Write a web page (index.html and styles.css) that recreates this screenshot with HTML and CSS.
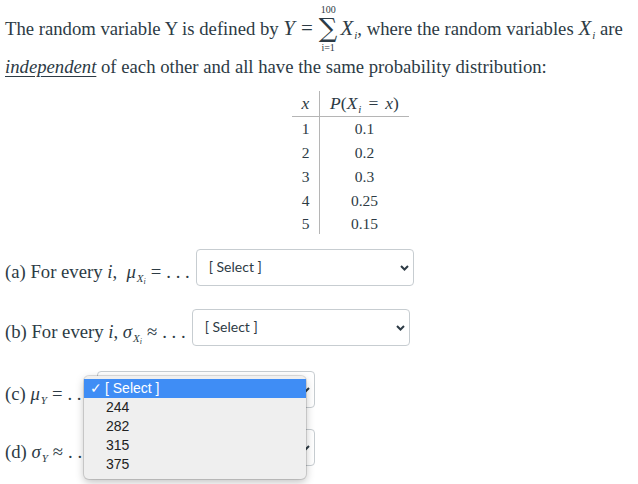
FILE: index.html
```html
<!DOCTYPE html>
<html>
<head>
<meta charset="utf-8">
<link rel="stylesheet" href="styles.css">
</head>
<body>
<div class="page">
  <p class="intro">The random variable Y is defined by <span class="m"><i>Y</i><span class="op">=</span><span class="sum"><span class="lim">100</span><span class="sig">∑</span><span class="lim lo">i=1</span></span><i>X</i><sub><i>i</i></sub></span>, where the random variables <span class="m"><i>X</i><sub><i>i</i></sub></span> are<br><u><i>independent</i></u> of each other and all have the same probability distribution:</p>

  <table class="dist">
    <tr class="head"><th class="cx"><i>x</i></th><th class="cp"><i>P</i>(<i>X</i><sub><i>i</i></sub><span class="op">=</span><i>x</i>)</th></tr>
    <tr><td class="cx">1</td><td class="cp">0.1</td></tr>
    <tr><td class="cx">2</td><td class="cp">0.2</td></tr>
    <tr><td class="cx">3</td><td class="cp">0.3</td></tr>
    <tr><td class="cx">4</td><td class="cp">0.25</td></tr>
    <tr><td class="cx">5</td><td class="cp">0.15</td></tr>
  </table>

  <div class="q qa">
    <span class="label">(a) For every <i>i</i>,&nbsp; <span class="m"><i>μ</i><sub><i>X</i><sub><i>i</i></sub></sub><span class="op">=</span>. . .</span></span>
    <div class="select"><span>[ Select ]</span><svg class="chev" width="9" height="6" viewBox="0 0 9 6"><path d="M1 1 L4.5 4.5 L8 1" fill="none" stroke="#2d3b45" stroke-width="2"/></svg></div>
  </div>
  <div class="q qb">
    <span class="label">(b) For every <i>i</i>, <span class="m"><i>σ</i><sub><i>X</i><sub><i>i</i></sub></sub><span class="op">≈</span>. . .</span></span>
    <div class="select"><span>[ Select ]</span><svg class="chev" width="9" height="6" viewBox="0 0 9 6"><path d="M1 1 L4.5 4.5 L8 1" fill="none" stroke="#2d3b45" stroke-width="2"/></svg></div>
  </div>
  <div class="q qc">
    <span class="label">(c) <span class="m"><i>μ</i><sub><i>Y</i></sub><span class="op">=</span>. . .</span></span>
    <div class="select"><span>[ Select ]</span><svg class="chev" width="9" height="6" viewBox="0 0 9 6"><path d="M1 1 L4.5 4.5 L8 1" fill="none" stroke="#2d3b45" stroke-width="2"/></svg></div>
  </div>
  <div class="q qd">
    <span class="label">(d) <span class="m"><i>σ</i><sub><i>Y</i></sub><span class="op">≈</span>. . .</span></span>
    <div class="select"><span>[ Select ]</span><svg class="chev" width="9" height="6" viewBox="0 0 9 6"><path d="M1 1 L4.5 4.5 L8 1" fill="none" stroke="#2d3b45" stroke-width="2"/></svg></div>
  </div>

  <div class="menu">
    <div class="item sel"><span class="check">✓</span>[ Select ]</div>
    <div class="item">244</div>
    <div class="item">282</div>
    <div class="item">315</div>
    <div class="item">375</div>
  </div>
</div>
</body>
</html>
```

FILE: styles.css
```css
html, body {
  margin: 0;
  padding: 0;
  background: #ffffff;
}
.page {
  position: relative;
  width: 638px;
  height: 484px;
  overflow: hidden;
  font-family: "Liberation Serif", "Times New Roman", serif;
  font-size: 18.7px;
  color: #2d3b45;
}
.intro {
  margin: 0;
  padding: 5px 0 0 5px;
  line-height: 27px;
}
.intro u { text-decoration-thickness: 1px; text-underline-offset: 3px; }
.m { white-space: nowrap; }
.m i { font-style: italic; }
.intro .m { font-size: 21px; }
.op { margin: 0 5px; }
.intro .op { margin: 0 6px; }
sub {
  font-size: 11px;
  vertical-align: -4px;
  line-height: 0;
  margin-left: 1px;
}
sub sub { font-size: 8px; vertical-align: -2px; margin-left: 0; }
.sum {
  display: inline-block;
  text-align: center;
  vertical-align: -16px;
  line-height: 1;
  margin-right: 3px;
  padding-bottom: 0;
}
.sum .lim { display: block; font-size: 10px; line-height: 10px; }
.sum .lim.lo { margin-top: 2px; }
.sum .sig {
  display: block;
  font-family: "DejaVu Serif", serif;
  font-size: 26px;
  line-height: 26px;
  height: 26px;
}

.dist {
  border-collapse: collapse;
  margin: 11px 0 0 292px;
  font-size: 15.5px;
}
.dist .head th { font-size: 17.5px; }
.dist .op { margin: 0 7px; }
.dist th, .dist td {
  padding: 0;
  text-align: center;
  font-weight: normal;
  height: 24px;
}
.dist .head th { height: 25px; border-bottom: 1px solid #b5b5b5; }
.dist .cx { width: 27px; border-right: 1px solid #b5b5b5; }
.dist .cp { width: 89px; }
.dist tr:last-child td { height: 21px; }

.q {
  display: flex;
  align-items: center;
  height: 37px;
  padding-left: 5px;
}
.qa { margin-top: 15px; }
.qb { margin-top: 23px; }
.qc { margin-top: 25px; }
.qd { margin-top: 21px; }
.label { white-space: nowrap; padding-top: 8px; }
.select {
  box-sizing: border-box;
  width: 218px;
  height: 37px;
  border: 1px solid #c7cdd1;
  border-radius: 4px;
  display: flex;
  align-items: center;
  justify-content: space-between;
  padding: 0 4px 0 12px;
  font-family: Lato, "Open Sans", sans-serif;
  font-size: 14px;
  color: #2d3b45;
  margin-left: 6px;
}
.select span { margin-top: -2px; }
.chev { display: block; }

.menu {
  position: absolute;
  left: 84px;
  top: 376px;
  width: 222px;
  box-sizing: border-box;
  padding: 3px 0 5px;
  background: #efefef;
  border-radius: 5px;
  box-shadow: 0 0 0 1px rgba(0,0,0,0.12), 0 3px 8px rgba(0,0,0,0.25);
  font-family: "Liberation Sans", Arial, sans-serif;
  font-size: 14px;
  color: #222;
}
.item {
  height: 19px;
  line-height: 19px;
  padding-left: 22px;
}
.item.sel {
  background: #3f8df5;
  color: #fff;
  padding-left: 6px;
}
.check { display: inline-block; width: 15px; }
```
